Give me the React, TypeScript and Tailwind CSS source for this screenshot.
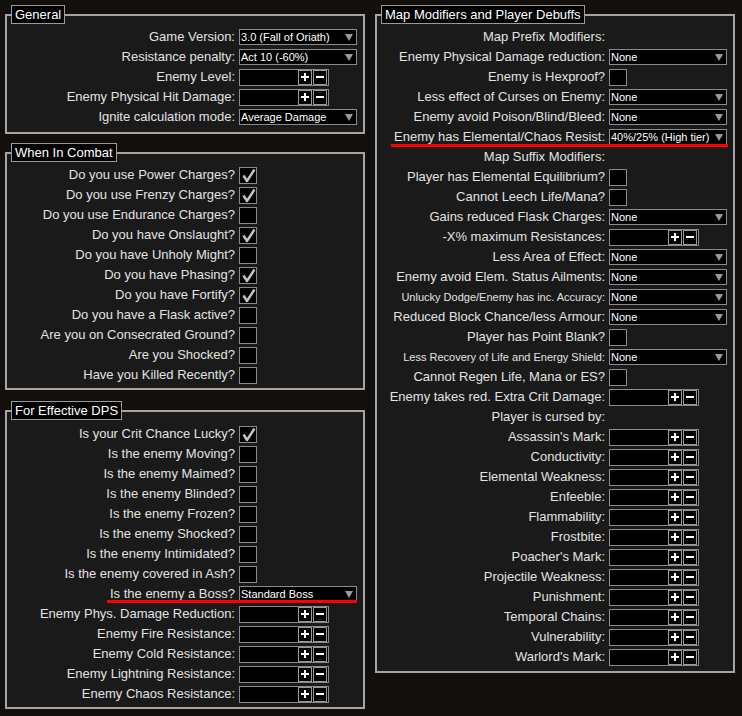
import type { ReactNode } from "react";

type Ctrl =
  | { kind: "none" }
  | { kind: "check"; on?: boolean }
  | { kind: "drop"; value: string }
  | { kind: "spin" };

type RowDef = {
  label: string;
  ctrl: Ctrl;
  small?: boolean;
  mark?: string; // classes for the red underline
};

const none: Ctrl = { kind: "none" };
const spin: Ctrl = { kind: "spin" };
const chk = (on = false): Ctrl => ({ kind: "check", on });
const drop = (value: string): Ctrl => ({ kind: "drop", value });

const general: RowDef[] = [
  { label: "Game Version:", ctrl: drop("3.0 (Fall of Oriath)") },
  { label: "Resistance penalty:", ctrl: drop("Act 10 (-60%)") },
  { label: "Enemy Level:", ctrl: spin },
  { label: "Enemy Physical Hit Damage:", ctrl: spin },
  { label: "Ignite calculation mode:", ctrl: drop("Average Damage") },
];

const combat: RowDef[] = [
  { label: "Do you use Power Charges?", ctrl: chk(true) },
  { label: "Do you use Frenzy Charges?", ctrl: chk(true) },
  { label: "Do you use Endurance Charges?", ctrl: chk() },
  { label: "Do you have Onslaught?", ctrl: chk(true) },
  { label: "Do you have Unholy Might?", ctrl: chk() },
  { label: "Do you have Phasing?", ctrl: chk(true) },
  { label: "Do you have Fortify?", ctrl: chk(true) },
  { label: "Do you have a Flask active?", ctrl: chk() },
  { label: "Are you on Consecrated Ground?", ctrl: chk() },
  { label: "Are you Shocked?", ctrl: chk() },
  { label: "Have you Killed Recently?", ctrl: chk() },
];

const dps: RowDef[] = [
  { label: "Is your Crit Chance Lucky?", ctrl: chk(true) },
  { label: "Is the enemy Moving?", ctrl: chk() },
  { label: "Is the enemy Maimed?", ctrl: chk() },
  { label: "Is the enemy Blinded?", ctrl: chk() },
  { label: "Is the enemy Frozen?", ctrl: chk() },
  { label: "Is the enemy Shocked?", ctrl: chk() },
  { label: "Is the enemy Intimidated?", ctrl: chk() },
  { label: "Is the enemy covered in Ash?", ctrl: chk() },
  {
    label: "Is the enemy a Boss?",
    ctrl: drop("Standard Boss"),
    mark: "left-[100px] top-[16px] w-[250px]",
  },
  { label: "Enemy Phys. Damage Reduction:", ctrl: spin },
  { label: "Enemy Fire Resistance:", ctrl: spin },
  { label: "Enemy Cold Resistance:", ctrl: spin },
  { label: "Enemy Lightning Resistance:", ctrl: spin },
  { label: "Enemy Chaos Resistance:", ctrl: spin },
];

const mapMods: RowDef[] = [
  { label: "Map Prefix Modifiers:", ctrl: none },
  { label: "Enemy Physical Damage reduction:", ctrl: drop("None") },
  { label: "Enemy is Hexproof?", ctrl: chk() },
  { label: "Less effect of Curses on Enemy:", ctrl: drop("None") },
  { label: "Enemy avoid Poison/Blind/Bleed:", ctrl: drop("None") },
  {
    label: "Enemy has Elemental/Chaos Resist:",
    ctrl: drop("40%/25% (High tier)"),
    mark: "left-[14px] top-[17px] w-[337px]",
  },
  { label: "Map Suffix Modifiers:", ctrl: none },
  { label: "Player has Elemental Equilibrium?", ctrl: chk() },
  { label: "Cannot Leech Life/Mana?", ctrl: chk() },
  { label: "Gains reduced Flask Charges:", ctrl: drop("None") },
  { label: "-X% maximum Resistances:", ctrl: spin },
  { label: "Less Area of Effect:", ctrl: drop("None") },
  { label: "Enemy avoid Elem. Status Ailments:", ctrl: drop("None") },
  { label: "Unlucky Dodge/Enemy has inc. Accuracy:", ctrl: drop("None"), small: true },
  { label: "Reduced Block Chance/less Armour:", ctrl: drop("None") },
  { label: "Player has Point Blank?", ctrl: chk() },
  { label: "Less Recovery of Life and Energy Shield:", ctrl: drop("None"), small: true },
  { label: "Cannot Regen Life, Mana or ES?", ctrl: chk() },
  { label: "Enemy takes red. Extra Crit Damage:", ctrl: spin },
  { label: "Player is cursed by:", ctrl: none },
  { label: "Assassin's Mark:", ctrl: spin },
  { label: "Conductivity:", ctrl: spin },
  { label: "Elemental Weakness:", ctrl: spin },
  { label: "Enfeeble:", ctrl: spin },
  { label: "Flammability:", ctrl: spin },
  { label: "Frostbite:", ctrl: spin },
  { label: "Poacher's Mark:", ctrl: spin },
  { label: "Projectile Weakness:", ctrl: spin },
  { label: "Punishment:", ctrl: spin },
  { label: "Temporal Chains:", ctrl: spin },
  { label: "Vulnerability:", ctrl: spin },
  { label: "Warlord's Mark:", ctrl: spin },
];

function Check({ on }: { on?: boolean }) {
  return (
    <div className="h-[17px] w-[18px] border border-[#8a8a8a] bg-black">
      {on && (
        <svg width="16" height="15" viewBox="0 0 16 15">
          <polyline
            points="3.5,7.5 7,13 14.5,1.5"
            fill="none"
            stroke="#c4c4c4"
            strokeWidth="2.4"
            strokeLinejoin="round"
          />
        </svg>
      )}
    </div>
  );
}

function Dropdown({ value }: { value: string }) {
  return (
    <div className="flex h-[16px] w-[118px] items-center justify-between border border-[#8a8a8a] bg-black pl-[1px] pr-[3px]">
      <span className="text-[11px] leading-none text-white">{value}</span>
      <svg width="8" height="7" viewBox="0 0 8 7">
        <polygon points="0,0 8,0 4,7" fill="#9a9a9a" />
      </svg>
    </div>
  );
}

function SpinBtn({ minus }: { minus?: boolean }) {
  return (
    <div className="relative h-[15px] w-[14px] border border-[#9a9a9a] bg-black">
      <div className="absolute left-[2px] top-[5px] h-[2px] w-[8px] bg-white" />
      {!minus && <div className="absolute left-[5px] top-[2px] h-[8px] w-[2px] bg-white" />}
    </div>
  );
}

function Spin() {
  return (
    <div className="flex h-[17px] w-[90px] items-center justify-end gap-[1px] border border-[#8a8a8a] bg-black pr-[1px]">
      <SpinBtn />
      <SpinBtn minus />
    </div>
  );
}

function Control({ ctrl }: { ctrl: Ctrl }) {
  if (ctrl.kind === "check") return <Check on={ctrl.on} />;
  if (ctrl.kind === "drop") return <Dropdown value={ctrl.value} />;
  if (ctrl.kind === "spin") return <Spin />;
  return null;
}

function Row({ row }: { row: RowDef }) {
  return (
    <div className="relative flex h-5 items-center">
      <div
        className={`w-[228px] whitespace-nowrap text-right text-[#e2e2e2] ${
          row.small ? "text-[11px]" : "text-[13px]"
        }`}
      >
        {row.label}
      </div>
      <div className="ml-1">
        <Control ctrl={row.ctrl} />
      </div>
      {row.mark && <div className={`absolute h-[3px] bg-[#ff0000] ${row.mark}`} />}
    </div>
  );
}

function Panel({
  title,
  rows,
  className,
}: {
  title: string;
  rows: RowDef[];
  className: string;
}) {
  return (
    <div className={`relative w-[360px] border-2 border-[#a4a4a4] bg-[#1a1a1a] ${className}`}>
      <div className="absolute left-[4px] top-[-11px] border border-[#9a9a9a] bg-black px-[3px] text-[13px] leading-[17px] text-white">
        {title}
      </div>
      {rows.map((r) => (
        <Row key={r.label} row={r} />
      ))}
    </div>
  );
}

function Column({ children }: { children: ReactNode }) {
  return <div className="flex flex-col">{children}</div>;
}

export default function App() {
  return (
    <div
      className="flex h-[716px] w-[742px] gap-[10px] overflow-hidden bg-[#120f0d] pl-[5px] pt-[14px]"
      style={{ fontFamily: '"Liberation Sans", Arial, sans-serif' }}
    >
      <Column>
        <Panel title="General" rows={general} className="pb-[5px] pt-[11px]" />
        <Panel title="When In Combat" rows={combat} className="mt-[18px] pb-[3px] pt-[11px]" />
        <Panel title="For Effective DPS" rows={dps} className="mt-[20px] pb-[3px] pt-[12px]" />
      </Column>
      <Column>
        <Panel
          title="Map Modifiers and Player Debuffs"
          rows={mapMods}
          className="pb-[4px] pt-[11px]"
        />
      </Column>
    </div>
  );
}
